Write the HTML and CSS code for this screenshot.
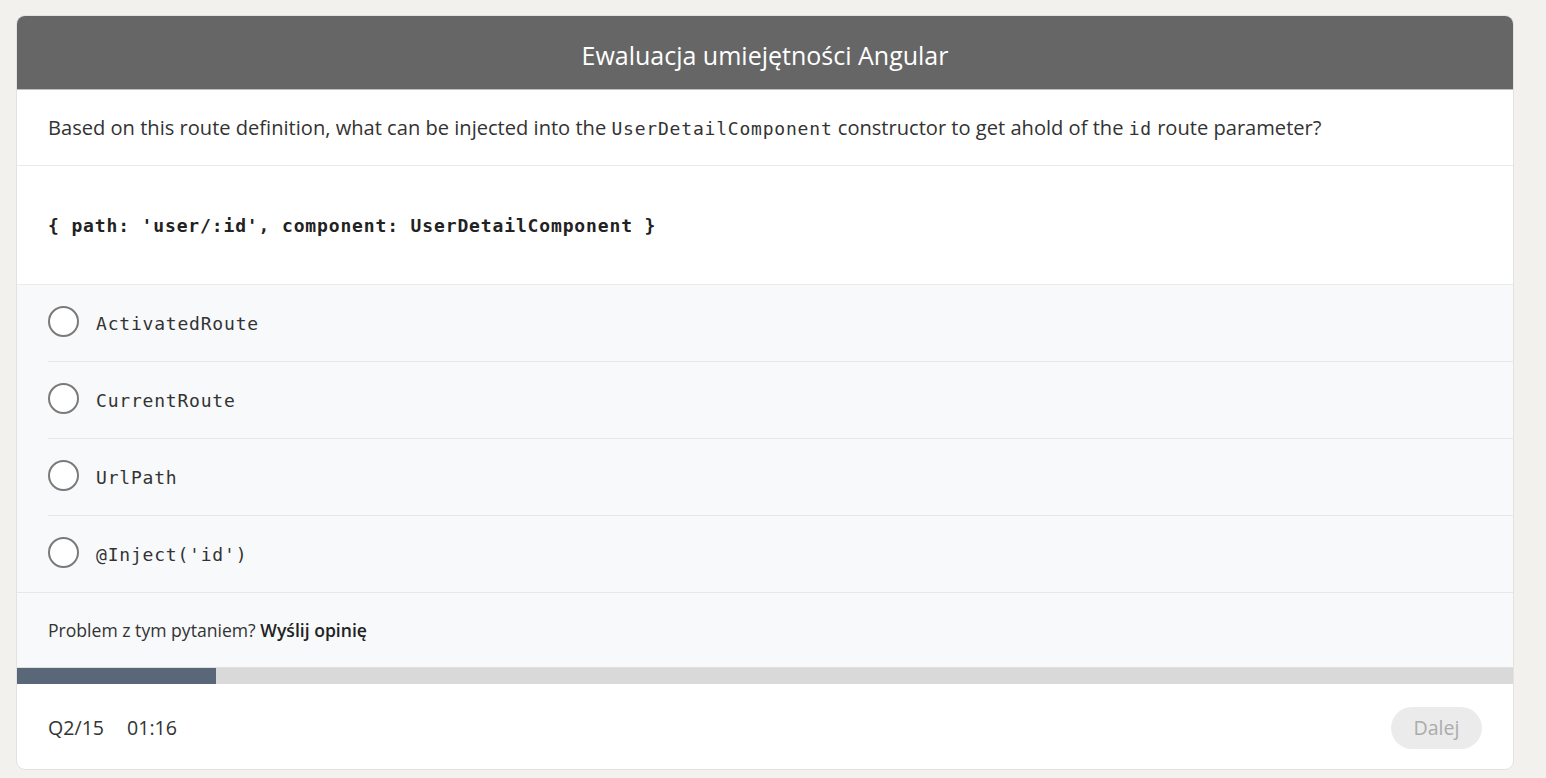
FILE: index.html
```html
<!DOCTYPE html>
<html lang="pl">
<head>
<meta charset="utf-8">
<title>Ewaluacja umiejętności Angular</title>
<link rel="stylesheet" href="styles.css">
</head>
<body>
<div class="card">
  <div class="card-header">Ewaluacja umiejętności Angular</div>
  <div class="question"><span>Based on this route definition, what can be injected into the <code>UserDetailComponent</code> constructor to get ahold of the <code>id</code> route parameter?</span></div>
  <div class="code-block"><pre>{ path: 'user/:id', component: UserDetailComponent }</pre></div>
  <div class="options">
    <label class="option"><span class="radio"></span><span class="opt-text">ActivatedRoute</span></label>
    <label class="option"><span class="radio"></span><span class="opt-text">CurrentRoute</span></label>
    <label class="option"><span class="radio"></span><span class="opt-text">UrlPath</span></label>
    <label class="option"><span class="radio"></span><span class="opt-text">@Inject('id')</span></label>
  </div>
  <div class="feedback"><span>Problem z tym pytaniem? <a class="feedback-link">Wyślij opinię</a></span></div>
  <div class="progress"><div class="progress-fill" style="width: 13.333%"></div></div>
  <div class="card-footer">
    <div class="status"><span class="qnum">Q2/15</span><span class="timer">01:16</span></div>
    <button class="next-btn" disabled>Dalej</button>
  </div>
</div>
</body>
</html>
```
FILE: styles.css
```css
html, body {
  margin: 0;
  padding: 0;
  background: #f2f1ee;
}
body {
  padding: 15px 32px 8px 16px;
  font-family: "Open Sans", "Noto Sans", sans-serif;
  color: #333;
}
.card {
  background: #fff;
  border: 1px solid #e2e2e2;
  border-radius: 9px;
  overflow: hidden;
  box-sizing: border-box;
}
.card-header {
  height: 75px;
  background: #666;
  color: #fff;
  font-size: 25px;
  display: flex;
  align-items: center;
  justify-content: center;
  border-bottom: 1px solid #bdbdbd;
  box-sizing: border-box;
  margin-top: -1px;
  padding-top: 6px;
}
.question {
  height: 76px;
  display: flex;
  align-items: center;
  padding-left: 31px;
  font-size: 20.1px;
  color: #333;
  border-bottom: 1px solid #eaeaea;
  box-sizing: border-box;
}
code {
  font-family: "DejaVu Sans Mono", monospace;
  font-size: 18px;
  letter-spacing: 0.8px;
  color: #333;
}
.code-block {
  height: 119px;
  display: flex;
  align-items: center;
  padding-left: 31px;
  border-bottom: 1px solid #eaeaea;
  box-sizing: border-box;
}
.code-block pre {
  margin: 0;
  font-family: "DejaVu Sans Mono", monospace;
  font-weight: bold;
  font-size: 18px;
  letter-spacing: 0.86px;
  color: #222;
}
.options {
  background: #f8f9fb;
}
.option {
  height: 77px;
  margin-left: 31px;
  display: flex;
  align-items: center;
  box-sizing: border-box;
  border-bottom: 1px solid #e6e7e9;
}
.option:last-child {
  margin-left: 0;
  padding-left: 31px;
}
.radio {
  width: 31px;
  height: 31px;
  border: 2px solid #7a7a7a;
  border-radius: 50%;
  box-sizing: border-box;
  background: #fff;
  flex: none;
  margin-top: -4px;
}
.opt-text {
  margin-left: 17px;
  font-family: "DejaVu Sans Mono", monospace;
  font-size: 18px;
  letter-spacing: 0.8px;
  color: #333;
}
.feedback {
  height: 74px;
  background: #f8f9fb;
  display: flex;
  align-items: center;
  padding-left: 31px;
  font-size: 17.6px;
  color: #333;
}
.feedback-link {
  font-weight: 600;
  color: #222;
}
.progress {
  height: 17px;
  background: #d9d9d9;
  border-top: 1px solid #e0e0e0;
  box-sizing: border-box;
}
.progress-fill {
  height: 100%;
  background: #5a6778;
}
.card-footer {
  height: 85px;
  display: flex;
  align-items: center;
  justify-content: space-between;
  padding: 0 31px;
}
.status {
  font-size: 19.6px;
  color: #333;
  display: flex;
  gap: 23px;
  margin-top: 2px;
}
.next-btn {
  width: 91px;
  height: 42px;
  border: none;
  border-radius: 21px;
  background: #ebebeb;
  color: #ababab;
  font-family: "Open Sans", "Noto Sans", sans-serif;
  font-size: 19.6px;
  margin-top: 2px;
  padding: 0;
}
```
